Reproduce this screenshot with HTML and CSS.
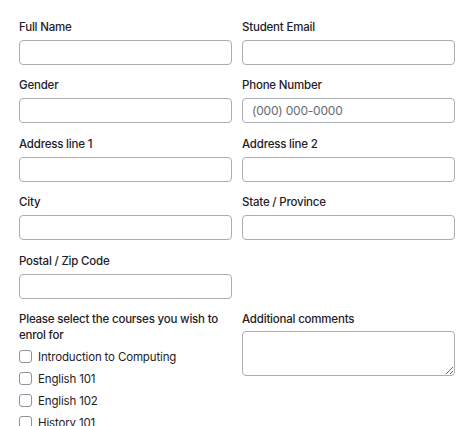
FILE: index.html
```html
<!DOCTYPE html>
<html lang="en">
<head>
    <meta charset="UTF-8">
    <meta name="viewport" content="width=device-width, initial-scale=1.0">
    <title>Student Enrolment</title>
    <link rel="stylesheet" href="styles.css">
</head>
<body>
    <form class="enrol-form">
        <div class="field">
            <label class="field-label">Full Name</label>
            <input class="field-input" type="text">
        </div>
        <div class="field">
            <label class="field-label">Student Email</label>
            <input class="field-input" type="email">
        </div>

        <div class="field">
            <label class="field-label">Gender</label>
            <input class="field-input" type="text">
        </div>
        <div class="field">
            <label class="field-label">Phone Number</label>
            <input class="field-input" type="tel" placeholder="(000) 000-0000">
        </div>

        <div class="field">
            <label class="field-label">Address line 1</label>
            <input class="field-input" type="text">
        </div>
        <div class="field">
            <label class="field-label">Address line 2</label>
            <input class="field-input" type="text">
        </div>

        <div class="field">
            <label class="field-label">City</label>
            <input class="field-input" type="text">
        </div>
        <div class="field">
            <label class="field-label">State / Province</label>
            <input class="field-input" type="text">
        </div>

        <div class="field">
            <label class="field-label">Postal / Zip Code</label>
            <input class="field-input" type="text">
        </div>
        <div class="field"></div>

        <div class="field">
            <p class="field-label">Please select the courses you wish to enrol for</p>
            <ul class="course-list">
                <li><label class="course"><span class="check"></span>Introduction to Computing</label></li>
                <li><label class="course"><span class="check"></span>English 101</label></li>
                <li><label class="course"><span class="check"></span>English 102</label></li>
                <li><label class="course"><span class="check"></span>History 101</label></li>
            </ul>
        </div>
        <div class="field">
            <label class="field-label">Additional comments</label>
            <textarea class="field-input comments"></textarea>
        </div>
    </form>
</body>
</html>
```

FILE: styles.css
```css
:root {
    --text-color: #1e2127;
    --border-color: #a9adb4;
    --muted-color: #646a73;
}

* {
    margin: 0;
    padding: 0;
    box-sizing: border-box;
    font-family: 'Inter', 'Liberation Sans', sans-serif;
}

body {
    background: #fff;
    color: var(--text-color);
    overflow: hidden;
}

.enrol-form {
    display: grid;
    grid-template-columns: 1fr 1fr;
    column-gap: 10px;
    row-gap: 12.4px;
    padding: 19px 19px 0;
}

.field {
    display: flex;
    flex-direction: column;
}

.field-label {
    font-size: 11.5px;
    font-weight: 500;
    line-height: 16px;
    letter-spacing: -0.2px;
    margin-bottom: 5px;
}

.field-input {
    width: 100%;
    height: 25px;
    border: 1px solid var(--border-color);
    border-radius: 4px;
    padding: 0 9px;
    font-size: 12px;
    letter-spacing: -0.2px;
    color: var(--text-color);
    background: #fff;
    outline: none;
}

.field-input::placeholder {
    color: var(--muted-color);
}

.comments {
    height: 45px;
    resize: vertical;
    margin-top: -1px;
}

.course-list {
    list-style: none;
    margin-top: -2px;
}

.course {
    display: flex;
    align-items: center;
    gap: 6px;
    height: 22px;
    font-size: 11.5px;
    letter-spacing: -0.15px;
}

.check {
    width: 13px;
    height: 13px;
    border: 1.5px solid #8e929a;
    border-radius: 3px;
    flex-shrink: 0;
}
```
